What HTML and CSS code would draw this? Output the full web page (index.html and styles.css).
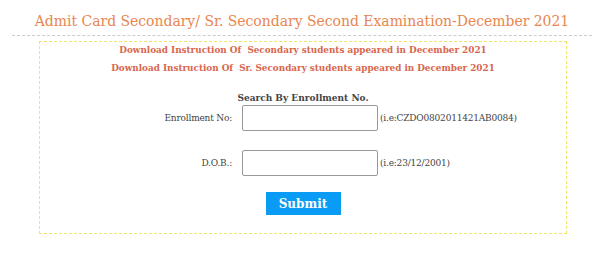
FILE: index.html
```html
<!DOCTYPE html>
<html lang="en">
<head>
    <meta charset="UTF-8">
    <meta name="viewport" content="width=device-width, initial-scale=1.0">
    <title>Admit Card</title>
    <link rel="stylesheet" href="styles.css">
</head>
<body>

    <!-- Heading -->
    <div class="heading">
        <h2>Admit Card Secondary/ Sr. Secondary Second Examination-December 2021</h2>
    </div>

    <div class="box">
        <a href="#" class="notice">Download Instruction Of &nbsp;Secondary students appeared in December 2021</a>
        <a href="#" class="notice">Download Instruction Of &nbsp;Sr. Secondary students appeared in December 2021</a>

        <h4>Search By Enrollment No.</h4>
        <div class="row">
            <label for="enroll">Enrollment No:</label>
            <input type="text" id="enroll">
            <span class="hint">(i.e:CZDO0802011421AB0084)</span>
        </div>
        <div class="row last">
            <label for="dob">D.O.B.:</label>
            <input type="text" id="dob">
            <span class="hint">(i.e:23/12/2001)</span>
        </div>
        <div class="actions">
            <button type="button">Submit</button>
        </div>
    </div>

</body>
</html>
```

FILE: styles.css
```css
body {
    font-family: "DejaVu Serif", "Liberation Serif", serif;
    color: #444;
    background: #fff;
    margin: 0;
    padding: 0;
}
.heading {
    margin: 0 12px;
    border-bottom: 1px dashed #c9ccd8;
    text-align: center;
}
.heading h2 {
    margin: 0;
    padding: 12px 0 5px;
    font-family: "DejaVu Serif Condensed", "DejaVu Serif", serif;
    font-stretch: condensed;
    font-size: 15.5px;
    font-weight: normal;
    white-space: nowrap;
    color: #e8864f;
}
.box {
    margin: 5px 37px 0 39px;
    border: 1px dashed #f2e36a;
    padding: 0 0 18px;
    text-align: center;
}
.notice {
    display: block;
    font-family: "DejaVu Serif Condensed", "DejaVu Serif", serif;
    font-stretch: condensed;
    font-size: 9.8px;
    font-weight: bold;
    color: #d8664e;
    text-decoration: none;
    line-height: 18px;
}
.notice:first-child {
    margin-top: -1px;
}
h4 {
    margin: 15px 0 2px;
    font-family: "DejaVu Serif Condensed", "DejaVu Serif", serif;
    font-stretch: condensed;
    font-size: 10px;
    color: #444;
}
.row {
    display: flex;
    align-items: center;
    margin-bottom: 19px;
    font-size: 9px;
    letter-spacing: -0.2px;
}
.row.last {
    margin-bottom: 16px;
}
.row label {
    width: 192px;
    text-align: right;
    margin-right: 10px;
}
.row input {
    width: 130px;
    height: 20px;
    padding: 2px;
    border: 1px solid #999;
    border-radius: 2px;
    margin: 0;
}
.hint {
    margin-left: 2px;
}
.actions button {
    font-family: inherit;
    font-size: 12px;
    font-weight: bold;
    color: #fff;
    background: #0a9bf5;
    border: none;
    width: 75px;
    height: 23px;
    cursor: pointer;
}
```
